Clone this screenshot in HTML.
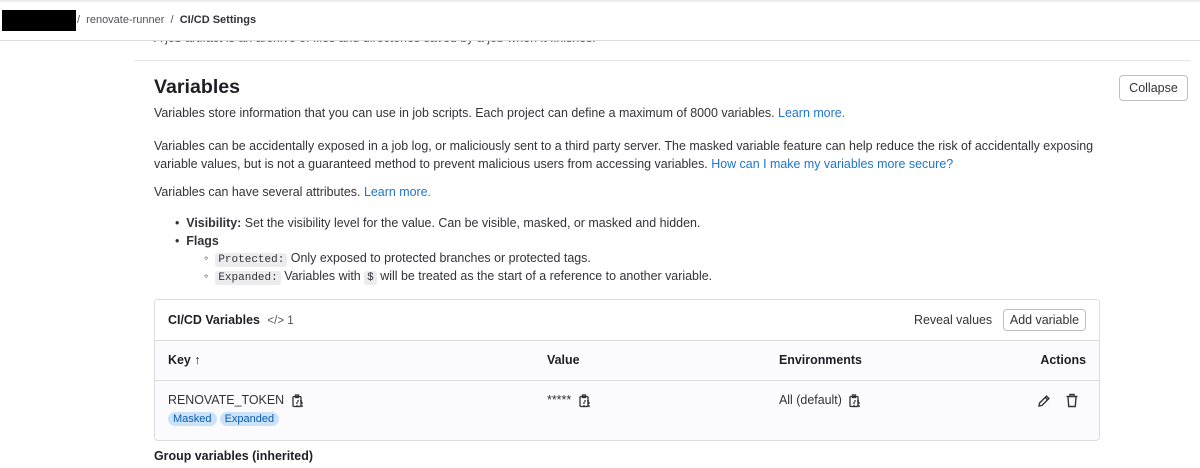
<!DOCTYPE html>
<html><head><meta charset="utf-8"><style>
*{box-sizing:border-box;margin:0;padding:0}
body{width:1200px;height:468px;overflow:hidden;background:#fff;font-family:"Liberation Sans",sans-serif;font-size:12.45px;color:#333238;position:relative}
.a{position:absolute;white-space:nowrap}
a{color:#1f75cb;text-decoration:none}
code{font-family:"Liberation Mono",monospace;font-size:11px;background:#ececef;border-radius:3px;padding:1px 3px}
.ic{display:inline-block;vertical-align:middle;margin-left:4px}
</style></head><body>
<div class="a" style="left:0;top:0;width:1200px;height:41px;background:#fff;border-bottom:1px solid #dcdcde;z-index:2"></div>
<div class="a" style="left:0;top:0;width:1200px;height:2px;background:#ececef;z-index:3"></div>
<div class="a" style="left:2px;top:10px;width:74px;height:21px;background:#000;z-index:3"></div>
<div class="a" style="left:77px;top:14px;font-size:11px;color:#535158;z-index:3">/ &nbsp;renovate-runner &nbsp;/ &nbsp;<b style="color:#333238">CI/CD Settings</b></div>
<div class="a" style="left:154px;top:31px;color:#555;z-index:1">A job artifact is an archive of files and directories saved by a job when it finishes.</div>
<div class="a" style="left:134px;top:60px;width:1056px;height:1px;background:#e6e6e8"></div>
<div class="a" style="left:154px;top:76px;font-size:19.6px;font-weight:bold;color:#1f1e24">Variables</div>
<div class="a" style="left:1119px;top:75px;width:69px;height:26px;border:1px solid #bfbfc3;border-radius:4px;text-align:center;line-height:24px;font-size:12.5px">Collapse</div>
<div class="a" style="left:154px;top:106px">Variables store information that you can use in job scripts. Each project can define a maximum of 8000 variables. <a>Learn more.</a></div>
<div class="a" style="left:154px;top:138px;line-height:17.5px">Variables can be accidentally exposed in a job log, or maliciously sent to a third party server. The masked variable feature can help reduce the risk of accidentally exposing<br>variable values, but is not a guaranteed method to prevent malicious users from accessing variables. <a>How can I make my variables more secure?</a></div>
<div class="a" style="left:154px;top:185px">Variables can have several attributes. <a>Learn more.</a></div>
<div class="a" style="left:175px;top:216px">• &nbsp;<b>Visibility:</b> Set the visibility level for the value. Can be visible, masked, or masked and hidden.</div>
<div class="a" style="left:175px;top:234px">• &nbsp;<b>Flags</b></div>
<div class="a" style="left:204px;top:251px">◦ &nbsp;<code>Protected:</code> Only exposed to protected branches or protected tags.</div>
<div class="a" style="left:204px;top:269px">◦ &nbsp;<code>Expanded:</code> Variables with <code>$</code> will be treated as the start of a reference to another variable.</div>
<div class="a" style="left:154px;top:299px;width:946px;height:142px;border:1px solid #dcdcde;border-radius:4px;overflow:hidden;background:#fbfafd">
 <div style="height:41px;background:#fff;border-bottom:1px solid #dcdcde;position:relative">
  <div class="a" style="left:13px;top:13px;font-weight:bold;color:#1f1e24">CI/CD Variables <span style="font-weight:normal;color:#535158;font-size:11.5px;margin-left:4px">&lt;/&gt; 1</span></div>
  <div class="a" style="left:759px;top:13px">Reveal values</div>
  <div class="a" style="left:848px;top:9px;width:83px;height:22px;border:1px solid #bfbfc3;border-radius:4px;text-align:center;line-height:20px">Add variable</div>
 </div>
 <div style="height:40px;border-bottom:1px solid #dcdcde;position:relative;font-weight:bold;color:#1f1e24">
  <div class="a" style="left:13px;top:12px">Key ↑</div>
  <div class="a" style="left:392px;top:12px">Value</div>
  <div class="a" style="left:624px;top:12px">Environments</div>
  <div class="a" style="right:13px;top:12px">Actions</div>
 </div>
 <div style="position:relative">
  <div class="a" style="left:13px;top:12px">RENOVATE_TOKEN <svg class="ic" width="12" height="14" viewBox="0 0 12 14" fill="none" stroke="#333" stroke-width="1.3"><rect x="1" y="2.5" width="8" height="10" rx="1"/><rect x="3.5" y="1" width="3" height="2.5"/><rect x="5" y="7" width="5" height="5.5" stroke-dasharray="2 1"/></svg></div>
  <div class="a" style="left:13px;top:32px;font-size:11px;color:#0b5cad"><span style="background:#cbe2f9;border-radius:9px;padding:1px 5px">Masked</span> <span style="background:#cbe2f9;border-radius:9px;padding:1px 5px">Expanded</span></div>
  <div class="a" style="left:392px;top:12px">***** <svg class="ic" width="12" height="14" viewBox="0 0 12 14" fill="none" stroke="#333" stroke-width="1.3"><rect x="1" y="2.5" width="8" height="10" rx="1"/><rect x="3.5" y="1" width="3" height="2.5"/><rect x="5" y="7" width="5" height="5.5" stroke-dasharray="2 1"/></svg></div>
  <div class="a" style="left:624px;top:12px">All (default) <svg class="ic" width="12" height="14" viewBox="0 0 12 14" fill="none" stroke="#333" stroke-width="1.3"><rect x="1" y="2.5" width="8" height="10" rx="1"/><rect x="3.5" y="1" width="3" height="2.5"/><rect x="5" y="7" width="5" height="5.5" stroke-dasharray="2 1"/></svg></div>
  <svg class="a" style="left:882px;top:13px" width="14" height="14" viewBox="0 0 14 14" fill="none" stroke="#333" stroke-width="1.4"><path d="M2 12l.6-3L9.5 2.1l2.4 2.4L5 11.4z M8.2 3.4l2.4 2.4"/></svg>
  <svg class="a" style="left:910px;top:12px" width="14" height="15" viewBox="0 0 14 15" fill="none" stroke="#333" stroke-width="1.4"><path d="M1.5 3.5h11M5 3.5V1.5h4v2M3 3.5l.7 10h6.6l.7-10"/></svg>
 </div>
</div>
<div class="a" style="left:154px;top:449px;font-weight:bold;color:#1f1e24">Group variables (inherited)</div>
</body></html>
